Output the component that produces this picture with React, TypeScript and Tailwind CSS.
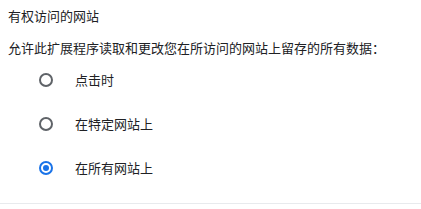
import React, { useState } from "react";

const options = ["点击时", "在特定网站上", "在所有网站上"];

export default function App() {
  const [selected, setSelected] = useState(2);
  return (
    <div className="w-[421px] h-[209px] bg-white text-[13px] text-[#202124] font-['Noto_Sans_CJK_SC','Noto_Sans',sans-serif] overflow-hidden">
      <div className="pl-2 pt-[6px] leading-[20px]">有权访问的网站</div>
      <div className="pl-2 mt-[12px] leading-[20px]">允许此扩展程序读取和更改您在所访问的网站上留存的所有数据：</div>
      <div className="flex flex-col pl-[39px]">
        {options.map((label, i) => {
          const checked = i === selected;
          return (
            <div
              key={label}
              className="h-[44px] flex items-center cursor-pointer"
              onClick={() => setSelected(i)}
            >
              <div
                className={
                  checked
                    ? "w-[14px] h-[14px] rounded-full border-2 border-[#1a73e8] flex items-center justify-center"
                    : "w-[14px] h-[14px] rounded-full border-2 border-[#5f6368] flex items-center justify-center"
                }
              >
                {checked && <div className="w-[6px] h-[6px] rounded-full bg-[#1a73e8]" />}
              </div>
              <span className="ml-[22px] leading-[20px]">{label}</span>
            </div>
          );
        })}
      </div>
      <div className="mt-[13px] h-px bg-[#e8eaed]" />
    </div>
  );
}
